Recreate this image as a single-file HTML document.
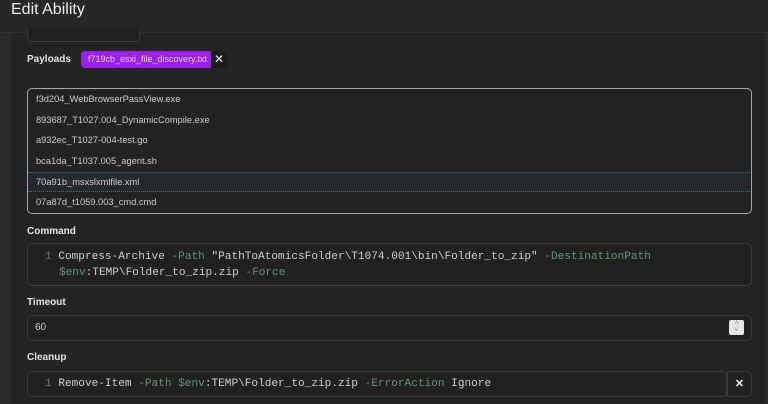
<!DOCTYPE html>
<html><head><style>
*{box-sizing:border-box;margin:0;padding:0}
body{width:768px;height:404px;overflow:hidden;background:#242424;font-family:"Liberation Sans",sans-serif;color:#ddd;position:relative}
.hdr{position:absolute;left:0;top:0;width:768px;height:33px;background:#272727;border-bottom:1px solid #333}
.hdr span{position:absolute;left:11px;top:1px;font-size:16px;color:#eee}
.strip{position:absolute;left:0;top:33px;width:11px;height:371px;background:#2b2b2b}
.rstrip{position:absolute;right:0;top:33px;width:2px;height:371px;background:#2e2e2e}
.lbl{position:absolute;left:27px;font-size:10px;font-weight:bold;color:#e6e6e6}
.box{position:absolute;background:#212121;border:1px solid #3c3c3c;border-radius:5px}
.mono{font-family:"Liberation Mono",monospace;font-size:11.1px;color:#cfcfcf;position:absolute;white-space:pre}
.g{color:#5f9a6f}
.ln{color:#777}
.item{position:absolute;left:36px;font-size:9.3px;color:#ccc}
</style></head><body>
<div class="hdr"><span>Edit Ability</span></div>
<div class="strip"></div><div class="rstrip"></div>
<div class="box" style="left:27px;top:28px;width:113px;height:14px;border-top:none;border-radius:0 0 5px 5px"></div>
<div class="lbl" style="top:54px">Payloads</div>
<div style="position:absolute;left:81px;top:51px;width:130px;height:17px;background:#9a1ff0;border-radius:4px 0 0 4px;font-size:9px;color:#e9d4ff;padding:3px 0 0 7px">f719cb_esxi_file_discovery.txt</div>
<div style="position:absolute;left:211px;top:51px;width:16px;height:17px;background:#1c1c1c;border-radius:0 4px 4px 0;color:#eee;font-size:12px;text-align:center;line-height:17px">✕</div>
<div style="position:absolute;left:27px;top:88px;width:725px;height:126px;border:1.5px solid #a9a9a9;border-radius:5px;background:#232323"></div>
<div style="position:absolute;left:28px;top:172px;width:722px;height:20px;border-top:1px dotted #3e6b93;border-bottom:1px dotted #3e6b93;background:#262a2e"></div>
<div class="item" style="top:94px">f3d204_WebBrowserPassView.exe</div>
<div class="item" style="top:115px">893687_T1027.004_DynamicCompile.exe</div>
<div class="item" style="top:135px">a932ec_T1027-004-test.go</div>
<div class="item" style="top:156px">bca1da_T1037.005_agent.sh</div>
<div class="item" style="top:177px">70a91b_msxslxmlfile.xml</div>
<div class="item" style="top:197px">07a87d_t1059.003_cmd.cmd</div>
<div class="lbl" style="top:226px">Command</div>
<div class="box" style="left:27px;top:243px;width:725px;height:43px"></div>
<div class="mono" style="left:45px;top:251px"><span class="ln">1</span> Compress-Archive <span class="g">-Path</span> "PathToAtomicsFolder\T1074.001\bin\Folder_to_zip" <span class="g">-DestinationPath</span></div>
<div class="mono" style="left:59px;top:267px"><span class="g">$env</span>:TEMP\Folder_to_zip.zip <span class="g">-Force</span></div>
<div class="lbl" style="top:297px">Timeout</div>
<div class="box" style="left:27px;top:315px;width:725px;height:26px"></div>
<div style="position:absolute;left:35px;top:322px;font-size:10px;color:#ccc">60</div>
<div style="position:absolute;left:729px;top:320px;width:15px;height:15px;background:#e4e4e4;border-radius:2px;font-size:7px;color:#888;text-align:center;line-height:7px">˄<br>˅</div>
<div class="lbl" style="top:352px">Cleanup</div>
<div class="box" style="left:27px;top:371px;width:700px;height:26px"></div>
<div class="mono" style="left:45px;top:378px"><span class="ln">1</span> Remove-Item <span class="g">-Path</span> <span class="g">$env</span>:TEMP\Folder_to_zip.zip <span class="g">-ErrorAction</span> Ignore</div>
<div class="box" style="left:727px;top:371px;width:25px;height:26px;border-radius:0 5px 5px 0;font-size:11px;font-weight:bold;text-align:center;line-height:24px;color:#eee">✕</div>
</body></html>
